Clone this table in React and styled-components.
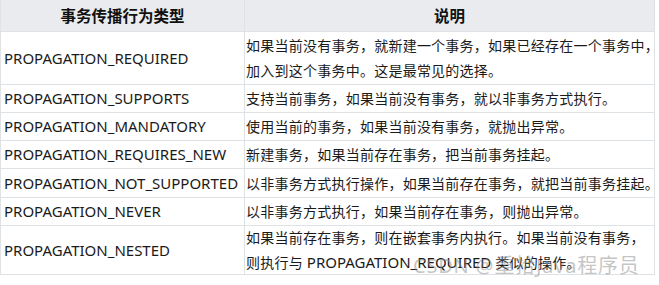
import React from "react";
import styled, { createGlobalStyle } from "styled-components";

const Global = createGlobalStyle`
  html, body { margin: 0; padding: 0; background: #fff; }
  body { font-family: "Noto Sans", "Noto Sans CJK SC", sans-serif; }
`;

const Page = styled.div`
  position: relative;
  width: 659px;
  height: 285px;
  overflow: hidden;
  background: #fff;
`;

const Table = styled.div`
  display: grid;
  grid-template-columns: 243px 410px;
  width: 655px;
  border-left: 1px solid #dfe2e5;
  border-right: 1px solid #dfe2e5;
  box-sizing: border-box;
  font-size: 14px;
  color: #1a1a1a;
`;

const Head = styled.div`
  background: #e9ebee;
  height: 31px;
  display: flex;
  align-items: center;
  justify-content: center;
  font-weight: 700;
  font-size: 15.5px;
  color: #111;
  border-left: ${(p) => (p.$first ? "none" : "1px solid #dfe2e5")};
  box-sizing: border-box;
`;

const Cell = styled.div`
  height: ${(p) => p.$h}px;
  display: flex;
  flex-direction: column;
  justify-content: center;
  padding-left: ${(p) => (p.$first ? 3 : 1)}px;
  border-top: 1px solid #dfe2e5;
  border-left: ${(p) => (p.$first ? "none" : "1px solid #dfe2e5")};
  box-sizing: border-box;
  line-height: 25px;
  white-space: nowrap;
  letter-spacing: 0.24px;
`;

const Latin = styled.span`
  font-size: 15px;
  letter-spacing: 0;
`;

const Bottom = styled.div`
  grid-column: 1 / 3;
  border-top: 1px solid #dfe2e5;
`;

const Watermark = styled.div`
  position: absolute;
  left: 413px;
  top: 250px;
  font-size: 20px;
  color: rgba(140, 140, 140, 0.5);
  font-family: "Noto Sans", "Noto Sans CJK SC", sans-serif;
  white-space: nowrap;
  letter-spacing: 0.8px;
`;

const rows = [
  ["PROPAGATION_REQUIRED", [["如果当前没有事务，就新建一个事务，如果已经存在一个事务中，"], ["加入到这个事务中。这是最常见的选择。"]], 53],
  ["PROPAGATION_SUPPORTS", [["支持当前事务，如果当前没有事务，就以非事务方式执行。"]], 28],
  ["PROPAGATION_MANDATORY", [["使用当前的事务，如果当前没有事务，就抛出异常。"]], 28],
  ["PROPAGATION_REQUIRES_NEW", [["新建事务，如果当前存在事务，把当前事务挂起。"]], 28],
  ["PROPAGATION_NOT_SUPPORTED", [["以非事务方式执行操作，如果当前存在事务，就把当前事务挂起。"]], 29],
  ["PROPAGATION_NEVER", [["以非事务方式执行，如果当前存在事务，则抛出异常。"]], 28],
  ["PROPAGATION_NESTED", [["如果当前存在事务，则在嵌套事务内执行。如果当前没有事务，"], ["则执行与 ", "PROPAGATION_REQUIRED", " 类似的操作。"]], 49],
];

export default function App() {
  return (
    <Page>
      <Global />
      <Table>
        <Head $first>事务传播行为类型</Head>
        <Head>说明</Head>
        {rows.map(([name, lines, h]) => (
          <React.Fragment key={name}>
            <Cell $first $h={h}>
              <Latin>{name}</Latin>
            </Cell>
            <Cell $h={h}>
              {lines.map((parts, i) => (
                <span key={i}>
                  {parts.map((t, j) =>
                    j === 1 ? <Latin key={j}>{t}</Latin> : <React.Fragment key={j}>{t}</React.Fragment>
                  )}
                </span>
              ))}
            </Cell>
          </React.Fragment>
        ))}
        <Bottom />
      </Table>
      <Watermark>CSDN @重拾Java程序员</Watermark>
    </Page>
  );
}
